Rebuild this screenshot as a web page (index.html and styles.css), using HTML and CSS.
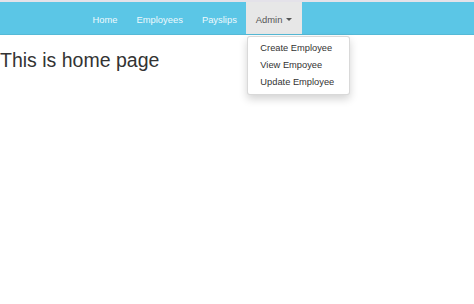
FILE: index.html
```html
<!DOCTYPE html>
<html>
<head>
<meta charset="utf-8">
<link rel="stylesheet" href="styles.css">
</head>
<body>
<nav class="navbar">
  <ul class="nav">
    <li><a class="nav-link" href="#">Home</a></li>
    <li><a class="nav-link" href="#">Employees</a></li>
    <li><a class="nav-link" href="#">Payslips</a></li>
    <li class="dropdown">
      <a class="nav-link active" href="#">Admin<span class="caret"></span></a>
      <ul class="dropdown-menu">
        <li><a href="#">Create Employee</a></li>
        <li><a href="#">View Empoyee</a></li>
        <li><a href="#">Update Employee</a></li>
      </ul>
    </li>
  </ul>
</nav>
<h2 class="title">This is home page</h2>
</body>
</html>
```
FILE: styles.css
```css
html, body {
  margin: 0;
  padding: 0;
  background: #fff;
}
body {
  min-height: 304px;
  font-family: "Liberation Sans", Arial, sans-serif;
  color: #333;
}
.navbar {
  position: relative;
  z-index: 10;
  border-top: 2px solid #e4e2e9;
  border-bottom: 1px solid #55b9d6;
  background: #5bc6e6;
  height: 32px;
}
.nav {
  list-style: none;
  margin: 0 0 0 83px;
  padding: 0;
  display: flex;
  height: 100%;
}
.nav > li {
  position: relative;
  height: 100%;
}
.nav-link {
  display: flex;
  align-items: center;
  box-sizing: border-box;
  height: 100%;
  padding: 3px 9.5px 0;
  line-height: 29px;
  font-size: 9.4px;
  color: #eef9fd;
  text-decoration: none;
}
.nav-link.active {
  background: #e7e7e7;
  color: #555;
}
.caret {
  display: inline-block;
  width: 0;
  height: 0;
  margin-left: 4px;
  border-top: 3px solid #555;
  border-left: 3px solid transparent;
  border-right: 3px solid transparent;
}
.dropdown-menu {
  position: absolute;
  z-index: 20;
  top: 34px;
  left: 1px;
  min-width: 103px;
  box-sizing: border-box;
  list-style: none;
  margin: 0;
  padding: 3px 0;
  background: #fff;
  border: 1px solid rgba(0, 0, 0, 0.15);
  border-radius: 3px;
  box-shadow: 0 4px 8px rgba(0, 0, 0, 0.175);
}
.dropdown-menu a {
  display: block;
  padding: 2px 12px;
  line-height: 13px;
  font-size: 9.3px;
  color: #333;
  text-decoration: none;
  white-space: nowrap;
}
.title {
  margin: 14px 0 0 0;
  font-size: 19.5px;
  line-height: 22px;
  font-weight: 400;
  color: #333;
}
```
